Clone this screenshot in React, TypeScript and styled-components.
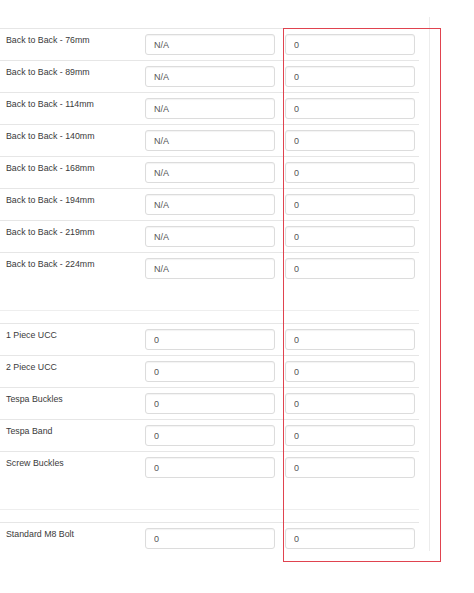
import React from "react";
import styled, { createGlobalStyle } from "styled-components";

const GlobalStyle = createGlobalStyle`
  html, body {
    margin: 0;
    padding: 0;
    background: #ffffff;
  }
  body {
    font-family: "Liberation Sans", Arial, sans-serif;
    color: #333333;
  }
`;

const Page = styled.div`
  position: relative;
  width: 474px;
  height: 593px;
  padding-top: 17px;
  box-sizing: border-box;
`;

const Panel = styled.div`
  width: 430px;
  height: 534px;
  box-sizing: border-box;
  padding: 11px 10px 0 0;
  border-right: 1px solid #ececec;
`;

const Section = styled.div`
  display: flex;
  flex-direction: column;
`;

const SectionBreak = styled.div`
  margin-top: 26px;
  height: 12px;
  border-top: 1px solid #eeeeee;
`;

const Row = styled.div`
  display: grid;
  grid-template-columns: 129px 130px 130px;
  column-gap: 10px;
  padding: 5px 5px 5px 6px;
  border-top: 1px solid #e6e6e6;
`;

const Label = styled.span`
  align-self: start;
  font-size: 8.8px;
  line-height: 13px;
  color: #3a3a3a;
`;

const Field = styled.input`
  box-sizing: border-box;
  width: 130px;
  height: 21px;
  margin: 0;
  padding: 0 8px;
  border: 1px solid #dcdcdc;
  border-radius: 3px;
  box-shadow: inset 0 1px 1px rgba(0, 0, 0, 0.05);
  background: #ffffff;
  font-family: "Liberation Sans", Arial, sans-serif;
  font-size: 9px;
  color: #555555;
  outline: none;
`;

const Highlight = styled.div`
  position: absolute;
  left: 283px;
  top: 28px;
  width: 158px;
  height: 534px;
  box-sizing: border-box;
  border: 1px solid #e0434f;
  pointer-events: none;
`;

type Item = { label: string; first: string; second: string };

const sections: Item[][] = [
  [
    { label: "Back to Back - 76mm", first: "N/A", second: "0" },
    { label: "Back to Back - 89mm", first: "N/A", second: "0" },
    { label: "Back to Back - 114mm", first: "N/A", second: "0" },
    { label: "Back to Back - 140mm", first: "N/A", second: "0" },
    { label: "Back to Back - 168mm", first: "N/A", second: "0" },
    { label: "Back to Back - 194mm", first: "N/A", second: "0" },
    { label: "Back to Back - 219mm", first: "N/A", second: "0" },
    { label: "Back to Back - 224mm", first: "N/A", second: "0" },
  ],
  [
    { label: "1 Piece UCC", first: "0", second: "0" },
    { label: "2 Piece UCC", first: "0", second: "0" },
    { label: "Tespa Buckles", first: "0", second: "0" },
    { label: "Tespa Band", first: "0", second: "0" },
    { label: "Screw Buckles", first: "0", second: "0" },
  ],
  [{ label: "Standard M8 Bolt", first: "0", second: "0" }],
];

export default function App() {
  return (
    <>
      <GlobalStyle />
      <Page>
        <Panel>
          {sections.map((items, si) => (
            <React.Fragment key={si}>
              {si > 0 && <SectionBreak />}
              <Section>
                {items.map((it) => (
                  <Row key={it.label}>
                    <Label>{it.label}</Label>
                    <Field defaultValue={it.first} />
                    <Field defaultValue={it.second} />
                  </Row>
                ))}
              </Section>
            </React.Fragment>
          ))}
        </Panel>
        <Highlight />
      </Page>
    </>
  );
}
